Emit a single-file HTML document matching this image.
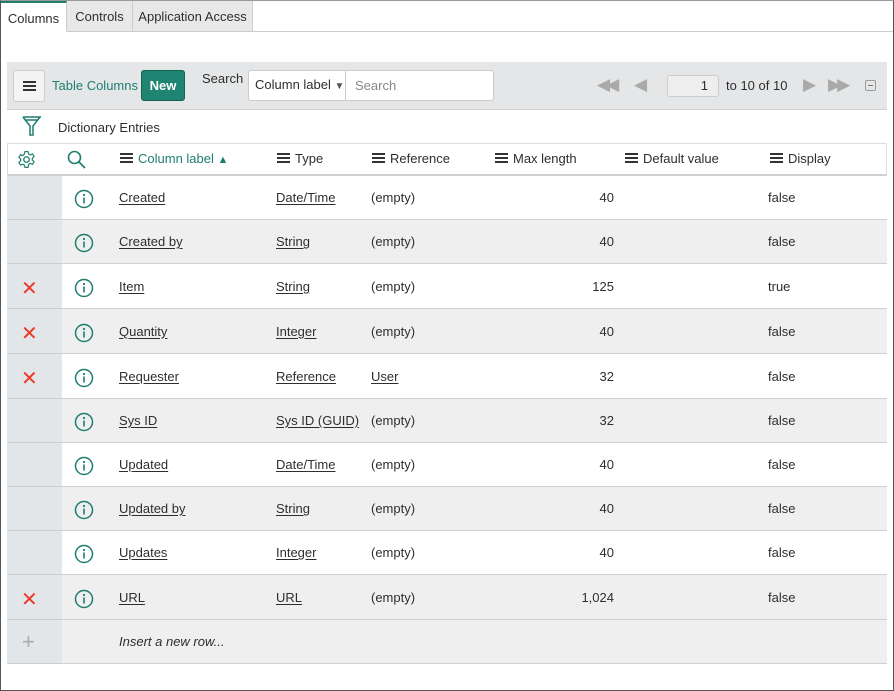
<!DOCTYPE html>
<html><head><style>
*{margin:0;padding:0;box-sizing:border-box}
body{width:894px;height:691px;position:relative;background:#fff;font-family:"Liberation Sans",sans-serif;font-size:13px;color:#2e2e2e;overflow:hidden}
.a{position:absolute}
.frame{left:0;top:0;width:894px;height:691px;border:1px solid #555;border-top:1px solid #999}
.tab{top:1px;height:31px;line-height:31px;text-align:center;font-size:13px;background:#e8e8e8;border-right:1px solid #ccc;border-bottom:1px solid #ccc}
.row{left:7px;width:880px;border-bottom:1px solid #cfcfcf}
.lc{left:7px;width:55px;background:#e3e6e8}
.t{position:absolute;white-space:nowrap}
u{text-decoration:underline;text-underline-offset:2px}
.hd{position:absolute;top:151px;font-size:13px}
.bars{display:inline-block;width:13px;height:10px;border-top:2px solid #333;border-bottom:2px solid #333;position:relative;margin-right:5px;vertical-align:0px}
.bars:after{content:"";position:absolute;left:0;right:0;top:2px;border-top:2px solid #333}
.ar{color:#aaa;font-size:17px}
</style></head><body>
<div class="a frame"></div>
<div class="a" style="left:1px;top:1px;width:892px;height:31px;border-bottom:1px solid #ccc"></div>
<div class="a tab" style="left:1px;width:66px;background:#fff;border-bottom:1px solid #fff;border-top:2px solid #1f7e6f">Columns</div>
<div class="a tab" style="left:67px;width:66px">Controls</div>
<div class="a tab" style="left:133px;width:120px">Application Access</div>

<div class="a" style="left:7px;top:62px;width:880px;height:48px;background:#e4e6e7;border-bottom:1px solid #cfcfcf"></div>
<div class="a" style="left:13px;top:70px;width:32px;height:32px;background:#f4f4f4;border:1px solid #ccc;border-radius:3px"><span class="bars" style="position:absolute;left:9px;top:10px"></span></div>
<div class="t" style="left:52px;top:78px;color:#1f7e6f;font-size:13px">Table Columns</div>
<div class="a" style="left:141px;top:70px;width:44px;height:31px;background:#1f8572;border:1px solid #15624f;border-radius:3px;color:#fff;line-height:29px;text-align:center;font-weight:bold;font-size:13px">New</div>
<div class="t" style="left:202px;top:71px;font-size:13px">Search</div>
<div class="a" style="left:248px;top:70px;width:246px;height:31px;background:#fff;border:1px solid #ccc;border-radius:3px"></div>
<div class="a" style="left:345px;top:70px;width:1px;height:31px;background:#ccc"></div>
<div class="t" style="left:255px;top:77px">Column label <span style="font-size:10px;color:#555">▼</span></div>
<div class="t" style="left:355px;top:78px;color:#888">Search</div>
<div class="t ar" style="left:597px;top:75px;letter-spacing:-4px">◀◀</div>
<div class="t ar" style="left:634px;top:75px">◀</div>
<div class="a" style="left:667px;top:75px;width:52px;height:22px;background:#eee;border:1px solid #ccc;border-radius:3px;text-align:right;padding-right:10px;line-height:20px">1</div>
<div class="t" style="left:726px;top:78px">to 10 of 10</div>
<div class="t ar" style="left:803px;top:75px">▶</div>
<div class="t ar" style="left:828px;top:75px;letter-spacing:-4px">▶▶</div>
<div class="a" style="left:865px;top:80px;width:11px;height:11px;border:1px solid #999;border-radius:2px"><div style="position:absolute;left:2px;top:4px;width:5px;height:1px;background:#777"></div></div>

<svg class="a" style="left:22px;top:115px" width="20" height="22" viewBox="0 0 20 22"><path d="M1 2h18M1 2l7 9v9h3v-9l7-9M4 5h12" fill="none" stroke="#1f7e6f" stroke-width="1.5"/></svg>
<div class="t" style="left:58px;top:120px">Dictionary Entries</div>

<div class="a" style="left:7px;top:143px;width:880px;height:33px;border:1px solid #ddd;border-bottom:2px solid #cfcfcf;background:#fff"></div>
<svg class="a" style="left:17px;top:150px" width="19" height="19" viewBox="0 0 24 24"><circle cx="12" cy="12" r="3.5" fill="none" stroke="#1f7e6f" stroke-width="1.6"/><path d="M10 2h4l.6 3 2.2 1.2 2.8-1.3 2 3.4-2.3 2 .1 2.4 2.2 2-2 3.4-2.8-1.2-2.2 1.3L14 22h-4l-.6-2.8-2.2-1.3-2.8 1.2-2-3.4 2.2-2V11.3l-2.2-2 2-3.4 2.8 1.3L9.4 5z" fill="none" stroke="#1f7e6f" stroke-width="1.5" stroke-linejoin="round"/></svg>
<svg class="a" style="left:67px;top:150px" width="19" height="19" viewBox="0 0 19 19"><circle cx="7.5" cy="7.5" r="6" fill="none" stroke="#1f7e6f" stroke-width="1.6"/><path d="M12 12l6 6" stroke="#1f7e6f" stroke-width="1.8"/></svg>
<div class="hd" style="left:120px;color:#1f7e6f"><span class="bars"></span>Column label <span style="font-size:11px">▲</span></div>
<div class="hd" style="left:277px"><span class="bars"></span>Type</div>
<div class="hd" style="left:372px"><span class="bars"></span>Reference</div>
<div class="hd" style="left:495px"><span class="bars"></span>Max length</div>
<div class="hd" style="left:625px"><span class="bars"></span>Default value</div>
<div class="hd" style="left:770px"><span class="bars"></span>Display</div>

<div id="rows"></div>
<script>
var d=[["Created","Date/Time","(empty)","40","false",0],["Created by","String","(empty)","40","false",0],["Item","String","(empty)","125","true",1],["Quantity","Integer","(empty)","40","false",1],["Requester","Reference","User","32","false",1],["Sys ID","Sys ID (GUID)","(empty)","32","false",0],["Updated","Date/Time","(empty)","40","false",0],["Updated by","String","(empty)","40","false",0],["Updates","Integer","(empty)","40","false",0],["URL","URL","(empty)","1,024","false",1]];
var tops=[176,220,264,309,354,399,443,487,531,575,620];
var h="";
for(var i=0;i<10;i++){var y=tops[i],hh=tops[i+1]-y,r=d[i],bg=i%2?"#efefef":"#fff",c=y+hh/2-8;
h+='<div class="a row" style="top:'+y+'px;height:'+hh+'px;background:'+bg+'"></div><div class="a lc" style="top:'+y+'px;height:'+(hh-1)+'px"></div>';
if(r[5])h+='<div class="t" style="left:21px;top:'+(c-3)+'px;color:#e8392b;font-size:20px">✕</div>';
h+='<svg class="a" style="left:74px;top:'+(c-1)+'px" width="20" height="20" viewBox="0 0 20 20"><circle cx="10" cy="10" r="8.5" fill="none" stroke="#1f7e6f" stroke-width="1.5"/><circle cx="10" cy="6" r="1.1" fill="#1f7e6f"/><path d="M10 8.5v6" stroke="#1f7e6f" stroke-width="1.6"/></svg>';
h+='<div class="t" style="left:119px;top:'+c+'px"><u>'+r[0]+'</u></div><div class="t" style="left:276px;top:'+c+'px"><u>'+r[1]+'</u></div>';
h+='<div class="t" style="left:371px;top:'+c+'px">'+(r[2]=="User"?'<u>User</u>':r[2])+'</div>';
h+='<div class="t" style="left:514px;width:100px;text-align:right;top:'+c+'px">'+r[3]+'</div><div class="t" style="left:768px;top:'+c+'px">'+r[4]+'</div>';}
h+='<div class="a row" style="top:620px;height:44px;background:#efefef;border-bottom:1px solid #cfcfcf"></div><div class="a lc" style="top:620px;height:43px"></div>';
h+='<div class="t" style="left:22px;top:629px;color:#aaa;font-size:22px">+</div><div class="t" style="left:119px;top:634px;font-style:italic">Insert a new row...</div>';
document.getElementById("rows").innerHTML=h;
</script>
</body></html>
